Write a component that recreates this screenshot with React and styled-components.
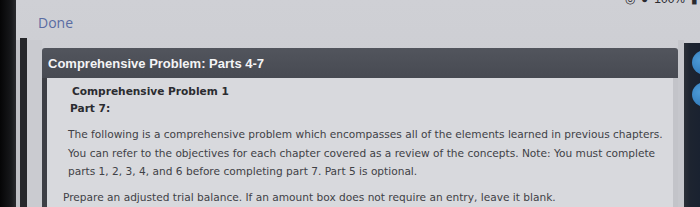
import React from 'react';
import styled, { createGlobalStyle } from 'styled-components';

const GlobalStyle = createGlobalStyle`
  html, body {
    margin: 0;
    padding: 0;
    background: #0c0c0e;
  }
`;

const Screen = styled.div`
  display: grid;
  grid-template-columns: 16px 1fr;
  width: 700px;
  height: 207px;
  overflow: hidden;
`;

const Bezel = styled.div`
  background: linear-gradient(90deg, #050506 0%, #17181b 70%, #2a2b2f 100%);
`;

const Display = styled.div`
  display: flex;
  flex-direction: column;
  background: linear-gradient(180deg, #cfd0d5 0%, #c9cacf 100%);
`;

const StatusBar = styled.div`
  height: 5px;
  overflow: hidden;
  display: flex;
  justify-content: flex-end;
  align-items: flex-end;
  padding-right: 2px;
  font-family: "Liberation Sans", Arial, sans-serif;
  font-size: 12px;
  line-height: 12px;
  color: #2a2b30;
  gap: 6px;
`;

const NavBar = styled.div`
  height: 35px;
  display: flex;
  align-items: center;
  padding-left: 22px;
`;

const DoneButton = styled.span`
  font-family: "Open Sans", "Liberation Sans", sans-serif;
  font-size: 14px;
  color: #5a6ca3;
`;

const Body = styled.div`
  flex: 1;
  display: flex;
  min-height: 0;
`;

const Gutter = styled.div`
  width: ${p => p.$w}px;
  flex: none;
  background: ${p => p.$bg};
  margin-top: ${p => p.$top || 0}px;
`;

const Card = styled.div`
  flex: 1;
  display: flex;
  flex-direction: column;
  margin-top: 8px;
  min-width: 0;
`;

const CardHeader = styled.div`
  height: 30px;
  flex: none;
  display: flex;
  align-items: center;
  padding-left: 6px;
  background: linear-gradient(180deg, #52555d 0%, #474a52 100%);
  border-radius: 3px 3px 0 0;
  color: #f4f4f6;
  font-family: "Liberation Sans", Arial, sans-serif;
  font-weight: bold;
  font-size: 13px;
`;

const CardBody = styled.div`
  flex: 1;
  background: #d8d9dd;
  border-left: 5px solid #3d3f45;
  border-right: 5px solid #c3c4c9;
  padding-top: 5px;
  font-family: "DejaVu Sans", Verdana, sans-serif;
  font-size: 10.6px;
  color: #3f4146;
`;

const Heading = styled.div`
  font-weight: bold;
  color: #2b2c30;
  line-height: 17px;
  padding-left: ${p => p.$indent}px;
`;

const Paragraph = styled.p`
  margin: ${p => p.$top}px 0 0;
  padding-left: ${p => p.$indent}px;
  line-height: 18.5px;
  white-space: nowrap;
`;

const Sidebar = styled.div`
  width: 16px;
  flex: none;
  margin-top: 3px;
  background: linear-gradient(90deg, #2b3038 0%, #1d2430 40%, #1a2230 100%);
  display: flex;
  flex-direction: column;
  gap: 7px;
  padding-top: 7px;
  overflow: hidden;
`;

const RoundButton = styled.div`
  width: 26px;
  height: 25px;
  flex: none;
  margin-left: 8px;
  border-radius: 50%;
  background: radial-gradient(circle at 30% 40%, #4c9ad6 0%, #2f78b8 70%);
`;

export default function App() {
  return (
    <>
      <GlobalStyle />
      <Screen>
        <Bezel />
        <Display>
          <StatusBar>
            <span>•</span>
            <span>◎</span>
            <span>●</span>
            <span>100%</span>
            <span>▮</span>
          </StatusBar>
          <NavBar>
            <DoneButton>Done</DoneButton>
          </NavBar>
          <Body>
            <Gutter $w={4} $bg="#bfc0c5" />
            <Gutter $w={7} $bg="#26272b" $top={-2} />
            <Gutter $w={15} $bg="#cacbd0" />
            <Card>
              <CardHeader>Comprehensive Problem: Parts 4-7</CardHeader>
              <CardBody>
                <Heading $indent={25}>Comprehensive Problem 1</Heading>
                <Heading $indent={23}>Part 7:</Heading>
                <Paragraph $top={8} $indent={21}>
                  The following is a comprehensive problem which encompasses all of the elements learned in previous chapters.
                  <br />
                  You can refer to the objectives for each chapter covered as a review of the concepts. Note: You must complete
                  <br />
                  parts 1, 2, 3, 4, and 6 before completing part 7. Part 5 is optional.
                </Paragraph>
                <Paragraph $top={7} $indent={16}>
                  Prepare an adjusted trial balance. If an amount box does not require an entry, leave it blank.
                </Paragraph>
              </CardBody>
            </Card>
            <Gutter $w={6} $bg="#c6c7cc" />
            <Sidebar>
              <RoundButton />
              <RoundButton />
            </Sidebar>
          </Body>
        </Display>
      </Screen>
    </>
  );
}
